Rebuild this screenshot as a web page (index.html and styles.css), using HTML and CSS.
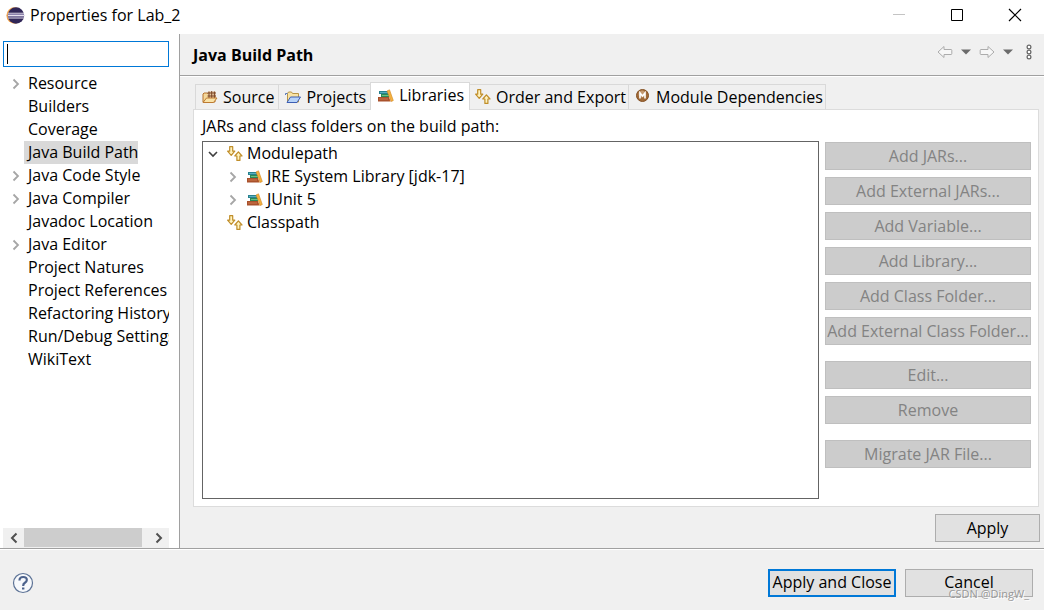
FILE: index.html
```html
<!DOCTYPE html>
<html lang="en">
<head>
<meta charset="utf-8">
<title>Properties for Lab_2</title>
<link rel="stylesheet" href="styles.css">
</head>
<body>
<svg class="defs" aria-hidden="true">
  <symbol id="books" viewBox="0 0 16 16">
    <path d="M1 3h9v3H1z" fill="#27818f"/><path d="M2 4h8v1H2z" fill="#59b0bd"/>
    <path d="M3 6h8v3H3z" fill="#2c8a55"/><path d="M4 7h7v1H4z" fill="#6abf86"/>
    <path d="M0 9h11v4.500H0z" fill="#a9512c"/><path d="M1 10.500h9v1H1z" fill="#cc7a4d"/>
    <path d="M9 3l2.500-1.200L15.300 12.500l-2 1z" fill="#f5b23f" stroke="#d0841f" stroke-width=".6"/>
    <path d="M11 9.500l1.800 4H11z" fill="#b95c20"/>
  </symbol>
  <symbol id="order" viewBox="0 0 16 16">
    <path d="M2.700 .7h3v4.500h2.100L4.200 9.400 .6 5.200h2.100z" fill="#fff3bf" stroke="#c08e2a" stroke-width="1.200" stroke-linejoin="round"/>
    <path d="M9.900 14.400h3V10H15L11.400 5.800 7.800 10h2.100z" fill="#fff3bf" stroke="#c08e2a" stroke-width="1.200" stroke-linejoin="round"/>
  </symbol>
  <symbol id="right" viewBox="0 0 10 12"><path d="M2.500 1.500L7 6l-4.500 4.500" fill="none" stroke="#a6a6a6" stroke-width="1.800"/></symbol>
  <symbol id="arrow" viewBox="0 0 16 14"><path d="M1 7l6-5.500v3h7q.8 0 .8 .8v3.400q0 .8-.8 .8h-7v3z" fill="#f7f7f7" stroke="#acacac"/></symbol>
</svg>

<header class="titlebar">
  <svg class="logo" viewBox="0 0 20 20">
    <circle cx="9" cy="10" r="8.600" fill="#f3a34b"/><circle cx="10.500" cy="10" r="8.600" fill="#302657"/>
    <path d="M2 7h17v1.200H2zM2 9.500h17v1.200H2zM2 12h17v1.200H2z" fill="#e6e1ef"/>
    <path d="M2 8.200h17v1.300H2zM2 10.700h17v1.300H2z" fill="#8c82ac"/>
  </svg>
  <h1 class="title">Properties for Lab_2</h1>
  <button class="winbtn" aria-label="Minimize"><svg viewBox="0 0 14 14"><path d="M1 6.500h12" stroke="#c4c4c4"/></svg></button>
  <button class="winbtn" aria-label="Maximize"><svg viewBox="0 0 14 14"><path d="M1.500 1.500h11v11h-11z" fill="none" stroke="#000"/></svg></button>
  <button class="winbtn" aria-label="Close"><svg viewBox="0 0 14 14"><path d="M1 1l12 12M13 1L1 13" stroke="#000" stroke-width="1.200"/></svg></button>
</header>

<div class="main">
  <aside class="side">
    <div class="filter"><input class="filter-input" type="text" aria-label="Filter"><span class="caret"></span></div>
    <ul class="nav">
      <li class="row"><svg class="chev"><use href="#right"/></svg><span class="label">Resource</span></li>
      <li class="row"><span class="chev"></span><span class="label">Builders</span></li>
      <li class="row"><span class="chev"></span><span class="label">Coverage</span></li>
      <li class="row"><span class="chev"></span><span class="label selected">Java Build Path</span></li>
      <li class="row"><svg class="chev"><use href="#right"/></svg><span class="label">Java Code Style</span></li>
      <li class="row"><svg class="chev"><use href="#right"/></svg><span class="label">Java Compiler</span></li>
      <li class="row"><span class="chev"></span><span class="label">Javadoc Location</span></li>
      <li class="row"><svg class="chev"><use href="#right"/></svg><span class="label">Java Editor</span></li>
      <li class="row"><span class="chev"></span><span class="label">Project Natures</span></li>
      <li class="row"><span class="chev"></span><span class="label">Project References</span></li>
      <li class="row"><span class="chev"></span><span class="label">Refactoring History</span></li>
      <li class="row"><span class="chev"></span><span class="label">Run/Debug Settings</span></li>
      <li class="row"><span class="chev"></span><span class="label">WikiText</span></li>
    </ul>
    <div class="scroll">
      <button class="scroll-btn" aria-label="Scroll left"><svg viewBox="0 0 10 12"><path d="M7.500 1.500L3 6l4.500 4.500" fill="none" stroke="#505050" stroke-width="2"/></svg></button>
      <div class="track"><div class="thumb"></div></div>
      <button class="scroll-btn" aria-label="Scroll right"><svg viewBox="0 0 10 12"><path d="M2.500 1.500L7 6l-4.500 4.500" fill="none" stroke="#505050" stroke-width="2"/></svg></button>
    </div>
  </aside>

  <main class="page">
    <div class="pagehead">
      <h2 class="heading">Java Build Path</h2>
      <div class="tools">
        <button class="tool" aria-label="Back"><svg class="arrow"><use href="#arrow"/></svg></button>
        <button class="tool" aria-label="Back history"><svg class="drop" viewBox="0 0 10 6"><path d="M0 .5h10L5 5.500z" fill="#6b6b6b"/></svg></button>
        <button class="tool" aria-label="Forward"><svg class="arrow flip"><use href="#arrow"/></svg></button>
        <button class="tool" aria-label="Forward history"><svg class="drop" viewBox="0 0 10 6"><path d="M0 .5h10L5 5.500z" fill="#6b6b6b"/></svg></button>
        <button class="tool menu" aria-label="View menu"><svg class="dots" viewBox="0 0 6 16"><g fill="#fff" stroke="#666" stroke-width="1.200"><circle cx="3" cy="3" r="1.900"/><circle cx="3" cy="8" r="1.900"/><circle cx="3" cy="13" r="1.900"/></g></svg></button>
      </div>
    </div>

    <div class="tabs" role="tablist">
      <button class="tab" role="tab"><svg class="icon" viewBox="0 0 16 16">
        <path d="M1 13V5l1-1h3.500l1 1.500H13V13z" fill="#f4d79a" stroke="#b5722c"/>
        <path d="M6 2.500h7.500V9H6z" fill="#e6c6a0"/><path d="M5.500 4h8.500M5.500 7h8.500M7 2.500V9M9.700 2v7M12.400 2.500V9" stroke="#7b4627"/>
        <path d="M1 13.500L4.500 9H15l-3.500 4.500z" fill="#fae3a8" stroke="#bd7b32"/></svg>Source</button>
      <button class="tab" role="tab"><svg class="icon" viewBox="0 0 16 16">
        <path d="M2.500 13V4.500l1-1.500h3l1 1.500h6V13z" fill="#f8e3a5" stroke="#b99545"/><path d="M.5 6V4.500h2" stroke="#5879b8" fill="none"/>
        <path d="M2 13.500L5.500 8h10L12 13.500z" fill="#b7d3f8" stroke="#3c5eb4"/></svg>Projects</button>
      <button class="tab active" role="tab" aria-selected="true"><svg class="icon"><use href="#books"/></svg>Libraries</button>
      <button class="tab" role="tab"><svg class="icon"><use href="#order"/></svg>Order and Export</button>
      <button class="tab" role="tab"><svg class="icon" viewBox="0 0 16 16">
        <circle cx="7.500" cy="6.500" r="6" fill="#a06a38" stroke="#845022"/><circle cx="7" cy="5" r="3.500" fill="#c49a70"/>
        <path d="M5 9.500V4l2.500 3L10 4v5.500" fill="none" stroke="#fff" stroke-width="1.600"/></svg>Module Dependencies</button>
    </div>

    <section class="panel">
      <p class="caption">JARs and class folders on the build path:</p>
      <div class="columns">
        <ul class="tree">
          <li class="node"><svg class="twist" viewBox="0 0 12 12"><path d="M2 4l4 4 4-4" fill="none" stroke="#404040" stroke-width="1.600"/></svg><svg class="icon"><use href="#order"/></svg>Modulepath</li>
          <li class="node child"><svg class="twist"><use href="#right"/></svg><svg class="icon"><use href="#books"/></svg>JRE System Library [jdk-17]</li>
          <li class="node child"><svg class="twist"><use href="#right"/></svg><svg class="icon"><use href="#books"/></svg>JUnit 5</li>
          <li class="node"><span class="twist"></span><svg class="icon"><use href="#order"/></svg>Classpath</li>
        </ul>
        <div class="actions">
          <button class="btn" disabled>Add JARs...</button>
          <button class="btn" disabled>Add External JARs...</button>
          <button class="btn" disabled>Add Variable...</button>
          <button class="btn" disabled>Add Library...</button>
          <button class="btn" disabled>Add Class Folder...</button>
          <button class="btn" disabled>Add External Class Folder...</button>
          <button class="btn group" disabled>Edit...</button>
          <button class="btn" disabled>Remove</button>
          <button class="btn group" disabled>Migrate JAR File...</button>
        </div>
      </div>
    </section>
    <div class="applyrow"><button class="btn apply">Apply</button></div>
  </main>
</div>

<footer class="footer">
  <button class="help" aria-label="Help"><svg viewBox="0 0 22 22"><circle cx="11" cy="11" r="9.500" fill="#f7f9fc" stroke="#5d7396" stroke-width="1.200"/><path d="M7.500 8.500q0-3.500 3.700-3.500t3.600 3q0 1.600-1.900 2.800T11.200 14" fill="none" stroke="#4c628c" stroke-width="2.200"/><path d="M10 15.500h2.400v2H10z" fill="#4c628c"/></svg></button>
  <button class="btn primary">Apply and Close</button>
  <button class="btn cancel">Cancel</button>
  <span class="watermark">CSDN @DingW_</span>
</footer>
</body>
</html>
```

FILE: styles.css
```css
* { box-sizing: border-box; }
body {
  margin: 0;
  min-height: 100vh;
  display: flex;
  flex-direction: column;
  background: #fff;
  color: #000;
  font: 16px/23px "Open Sans", "Noto Sans", sans-serif;
}
button { font: inherit; color: inherit; border: 0; padding: 0; background: none; }
ul { list-style: none; margin: 0; padding: 0; }
h1, h2, p { margin: 0; }
svg { display: block; flex: none; }
.defs { position: absolute; width: 0; height: 0; }

.titlebar { display: flex; align-items: center; height: 34px; padding: 0 0 4px 6px; }
.logo { width: 19px; height: 19px; }
.title { flex: 1; margin-left: 5px; font-size: 16px; font-weight: 400; }
.winbtn { display: grid; place-items: center; width: 58px; height: 30px; }
.winbtn svg { width: 14px; height: 14px; }

.main { flex: 1; display: flex; min-width: 0; }
.side { display: flex; flex-direction: column; width: 180px; padding: 7px 10px 0 3px; border-right: 1px solid #a0a0a0; }
.filter { position: relative; }
.filter-input { display: block; width: 100%; height: 26px; border: 1px solid #0078d7; padding: 0 4px; font: inherit; outline: 0; }
.caret { position: absolute; left: 4px; top: 3px; width: 1px; height: 20px; background: #000; }
.nav { flex: 1; padding-top: 5px; overflow: hidden; }
.row { display: flex; align-items: center; height: 23px; white-space: nowrap; }
.chev { flex: none; width: 10px; height: 12px; margin: 0 3px 0 8px; }
.label { padding: 0 4px; }
.selected { padding-right: 0; background: #d9d9d9; }
.scroll { display: flex; height: 20px; padding-bottom: 1px; background: #f0f0f0; }
.scroll-btn { display: grid; place-items: center; width: 21px; }
.scroll-btn svg { width: 10px; height: 12px; }
.track { flex: 1; }
.thumb { width: 95%; height: 100%; background: #cdcdcd; }

.page { flex: 1; display: flex; flex-direction: column; min-width: 0; background: #f0f0f0; }
.pagehead { display: flex; align-items: center; justify-content: space-between; height: 43px; padding: 1px 12px 0 13px; border-bottom: 1px solid #fff; box-shadow: inset 0 -1px #a0a0a0; }
.heading { font-size: 16px; font-weight: 700; }
.tools { display: flex; align-items: center; gap: 8px; padding-bottom: 7px; }
.arrow { width: 16px; height: 14px; }
.flip { transform: scaleX(-1); }
.drop { width: 10px; height: 6px; }
.menu { margin-left: 5px; }
.dots { width: 6px; height: 16px; }

.tabs { display: flex; align-items: flex-end; padding: 5px 15px 0; }
.tab { display: flex; align-items: center; gap: 5px; height: 25px; padding: 0 4px 0 6px; border: 1px solid #d9d9d9; border-width: 1px 0 0 1px; white-space: nowrap; }
.tab:last-child { padding-right: 2px; border-right-width: 1px; }
.tab.active { position: relative; height: 28px; margin-bottom: -1px; padding: 0 5px 2px 7px; border-right-width: 1px; background: #fff; }
.tab.active + .tab { border-left-width: 0; padding: 0 2px 0 5px; }
.icon { width: 16px; height: 16px; }

.panel { flex: 1; display: flex; flex-direction: column; margin: 0 5px 0 13px; padding: 5px 7px 7px 8px; border: 1px solid #dcdcdc; background: #fff; }
.caption { height: 26px; }
.columns { flex: 1; display: flex; gap: 6px; }
.tree { flex: 1; border: 1px solid #646464; }
.node { display: flex; align-items: center; gap: 4px; height: 23px; padding-left: 4px; }
.node.child { padding-left: 24px; }
.twist { width: 12px; height: 12px; margin-right: 4px; }
.actions { display: flex; flex-direction: column; gap: 7px; width: 206px; padding-top: 1px; }
.btn { height: 28px; border: 1px solid #adadad; background: #e1e1e1; white-space: nowrap; }
.btn:disabled { border-color: #bfbfbf; background: #ccc; color: #838383; }
.group { margin-top: 9px; }
.applyrow { display: flex; justify-content: flex-end; padding: 7px 4px 6px; }
.apply { width: 105px; }

.footer { position: relative; display: flex; align-items: center; gap: 9px; height: 62px; padding: 6px 11px 0 12px; border-top: 1px solid #a0a0a0; box-shadow: inset 0 1px #fff; background: #f0f0f0; }
.help { margin-right: auto; }
.help svg { width: 22px; height: 22px; }
.primary { width: 128px; border: 2px solid #0078d7; }
.cancel { width: 128px; }
.watermark { position: absolute; right: 15px; bottom: 8px; color: #999; font-size: 11px; line-height: 16px; text-shadow: 1px 1px #fff; }
```
